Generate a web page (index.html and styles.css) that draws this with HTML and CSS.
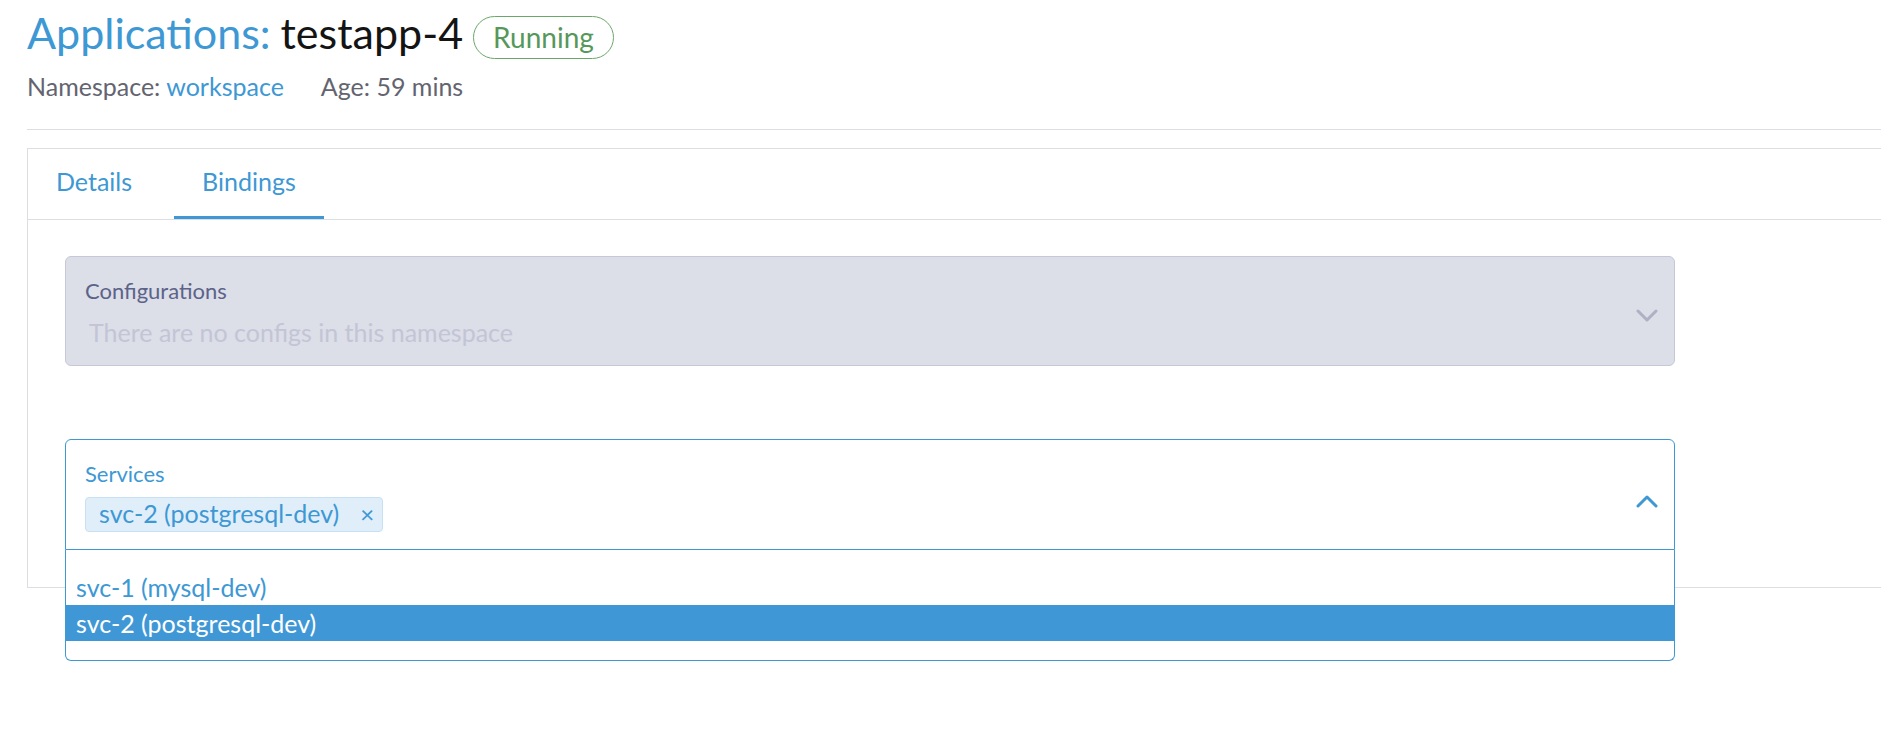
FILE: index.html
```html
<!DOCTYPE html>
<html>
<head>
<meta charset="utf-8">
<title>testapp-4</title>
<link rel="stylesheet" href="styles.css">
</head>
<body>
<div class="page">
  <header class="header">
    <h1 class="title">
      <span class="title-crumb">Applications:</span>
      <span class="title-name">testapp-4</span>
      <span class="badge">Running</span>
    </h1>
    <div class="meta">
      <span class="meta-item">Namespace: <a class="link" href="#">workspace</a></span>
      <span class="meta-item">Age: 59 mins</span>
    </div>
  </header>
  <div class="rule"></div>
  <section class="tabs">
    <nav class="tab-nav">
      <a class="tab" href="#">Details</a>
      <a class="tab tab-active" href="#">Bindings</a>
    </nav>
    <div class="tab-content">
      <div class="select select-disabled">
        <div class="select-control">
          <div class="select-body">
            <div class="select-label">Configurations</div>
            <div class="select-placeholder">There are no configs in this namespace</div>
          </div>
          <svg class="chevron" width="22" height="13" viewBox="0 0 22 13"><polyline points="2,2 11,11 20,2" fill="none" stroke="currentColor" stroke-width="3" stroke-linecap="round" stroke-linejoin="round"/></svg>
        </div>
      </div>
      <div class="select select-open">
        <div class="select-control">
          <div class="select-body">
            <div class="select-label">Services</div>
            <div class="chips">
              <span class="chip"><span class="chip-text">svc-2 (postgresql-dev)</span><span class="chip-x">×</span></span>
            </div>
          </div>
          <svg class="chevron" width="22" height="13" viewBox="0 0 22 13"><polyline points="2,11 11,2 20,11" fill="none" stroke="currentColor" stroke-width="3" stroke-linecap="round" stroke-linejoin="round"/></svg>
        </div>
        <ul class="menu">
          <li class="option">svc-1 (mysql-dev)</li>
          <li class="option option-active">svc-2 (postgresql-dev)</li>
        </ul>
      </div>
    </div>
  </section>
</div>
</body>
</html>
```
FILE: styles.css
```css
* { box-sizing: border-box; }
html, body { margin: 0; padding: 0; }
body {
  background: #ffffff;
  font-family: Lato, "Open Sans", sans-serif;
  color: #141414;
}
.page {
  min-height: 100vh;
  overflow: hidden;
  padding: 8px 0 0 27px;
}
.header { margin-right: 0; }
.title {
  display: flex;
  align-items: center;
  height: 50px;
  margin: 0;
  font-size: 43px;
  font-weight: 400;
  line-height: 50px;
}
.title-crumb { color: #3d98d4; margin-right: 10px; }
.title-name { color: #141414; }
.badge {
  display: inline-flex;
  align-items: center;
  flex: none;
  height: 43px;
  margin: 9px 0 0 10px;
  padding: 0 19px;
  border: 1px solid #6aa86a;
  border-radius: 22px;
  font-size: 28px;
  line-height: 41px;
  color: #55985a;
}
.meta {
  display: flex;
  gap: 37px;
  margin-top: 13px;
  font-size: 25px;
  line-height: 30px;
  color: #63646f;
}
.link { color: #3d98d4; text-decoration: none; }
.rule {
  height: 1px;
  background: #dcdde5;
  margin: 28px -20px 0 0;
}
.tabs {
  margin: 18px -20px 0 0;
  border: 1px solid #dcdde5;
}
.tab-nav {
  display: flex;
  border-bottom: 1px solid #dcdde5;
}
.tab {
  display: block;
  height: 70px;
  padding: 17px 28px 0;
  margin-right: 14px;
  font-size: 25px;
  line-height: 30px;
  color: #3d98d4;
  text-decoration: none;
  border-bottom: 3px solid transparent;
}
.tab-active { border-bottom-color: #3d98d4; }
.tab-content {
  padding: 36px 0 37px 37px;
  display: flex;
  flex-direction: column;
  gap: 73px;
}
.select {
  position: relative;
  width: 1610px;
}
.select-control {
  display: flex;
  align-items: center;
  height: 110px;
  padding: 21px 16px 0 19px;
  border: 1px solid #c6c8d8;
  border-radius: 6px;
}
.select-body { flex: 1; align-self: flex-start; }
.select-label {
  font-size: 22px;
  line-height: 26px;
}
.chevron { flex: none; }
.select-disabled .select-control {
  background: #dcdee8;
}
.select-disabled .select-label { color: #5b6389; }
.select-disabled .chevron { color: #aeb0c4; margin-top: -12px; }
.select-placeholder {
  margin-top: 13px;
  padding-left: 4px;
  font-size: 25px;
  line-height: 30px;
  color: #c3c5d6;
}
.select-open .select-control {
  height: 111px;
  border-color: #3d98d4;
  border-radius: 6px 6px 0 0;
}
.select-open .select-label { color: #3d98d4; }
.select-open .chevron { color: #3d98d4; margin-top: -7px; }
.chips { display: flex; margin-top: 10px; }
.chip {
  display: inline-flex;
  align-items: flex-start;
  height: 35px;
  padding: 0 8px 0 13px;
  border: 1px solid #c8e0f3;
  border-radius: 4px;
  background: #e0eef9;
  color: #3d98d4;
  font-size: 25px;
  line-height: 30px;
}
.chip-x {
  margin-left: 21px;
  font-size: 24px;
  line-height: 32px;
}
.menu {
  position: absolute;
  top: 100%;
  left: 0;
  right: 0;
  margin: 0;
  padding: 19px 0;
  list-style: none;
  background: #ffffff;
  border: 1px solid #3d98d4;
  border-top: none;
  border-radius: 0 0 6px 6px;
}
.option {
  height: 36px;
  padding-left: 10px;
  font-size: 25px;
  line-height: 36px;
  color: #3d98d4;
}
.option-active {
  background: #3f98d5;
  color: #ffffff;
}
```
